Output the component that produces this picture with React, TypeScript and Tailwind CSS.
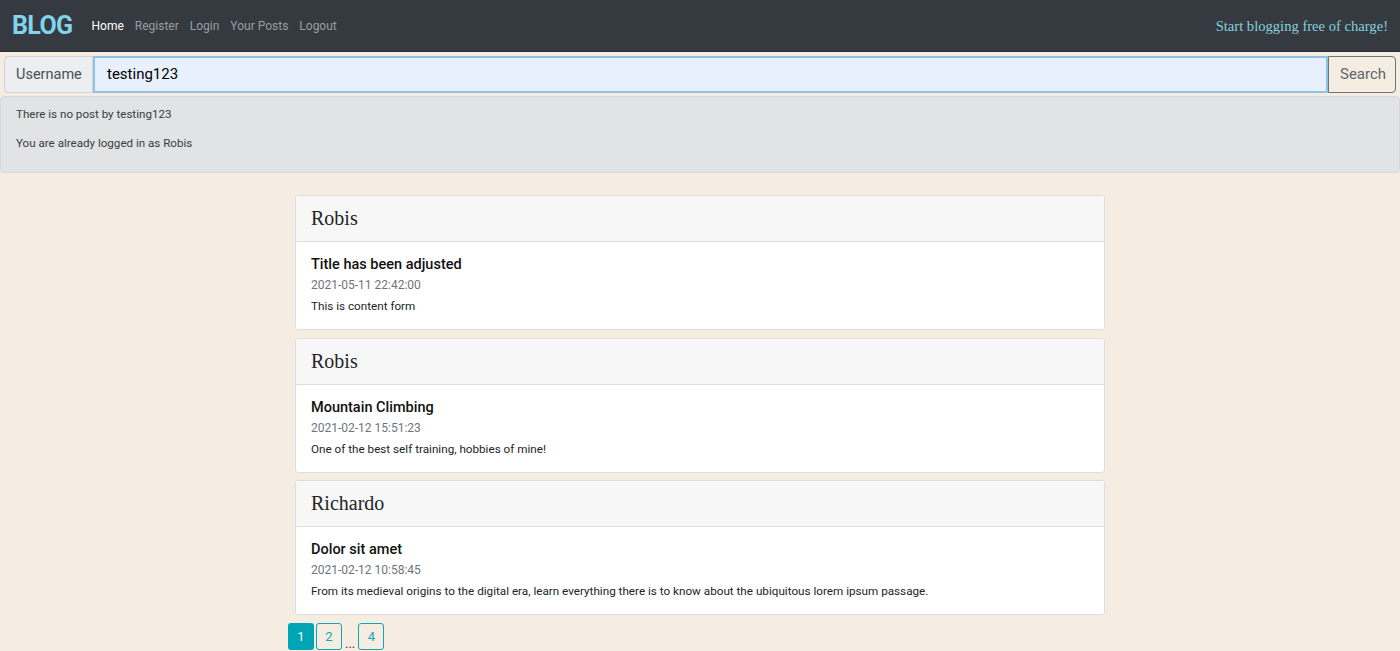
import React from 'react';

const posts = [
  { author: 'Robis', title: 'Title has been adjusted', date: '2021-05-11 22:42:00', content: 'This is content form' },
  { author: 'Robis', title: 'Mountain Climbing', date: '2021-02-12 15:51:23', content: 'One of the best self training, hobbies of mine!' },
  {
    author: 'Richardo',
    title: 'Dolor sit amet',
    date: '2021-02-12 10:58:45',
    content: 'From its medieval origins to the digital era, learn everything there is to know about the ubiquitous lorem ipsum passage.',
  },
];

export default function App() {
  return (
    <div className="min-h-[651px] bg-[#f5ece2] font-['Roboto',sans-serif] text-[#212529]">
      {/* Navbar */}
      <nav className="h-[52px] bg-[#343a40] flex items-center justify-between pl-3 pr-[12px] border-b border-[#2a2f34]">
        <div className="flex items-center">
          <span className="text-[25px] font-bold text-[#80d4ec] leading-none tracking-tight">BLOG</span>
          <div className="flex items-center gap-[11px] ml-[19px] text-[12px]">
            <span className="text-white">Home</span>
            <span className="text-[#9a9da0]">Register</span>
            <span className="text-[#9a9da0]">Login</span>
            <span className="text-[#9a9da0]">Your Posts</span>
            <span className="text-[#9a9da0]">Logout</span>
          </div>
        </div>
        <span className="font-['Liberation_Serif',serif] text-[14.6px] text-[#86cfdc] mt-[3px]">Start blogging free of charge!</span>
      </nav>

      {/* Search */}
      <div className="flex h-[37px] mx-1 mt-[4px] text-[15px]">
        <div className="flex items-center px-[11px] bg-[#eceef0] border border-[#ced4da] rounded-l-[4px] text-[#495057] text-[14.5px] w-[89px]">
          Username
        </div>
        <div className="flex-1 flex items-center pl-[12px] bg-[#e8f0fe] border-2 border-[#8fc1ea] text-black">
          testing123
        </div>
        <div className="flex items-center px-[11px] border border-[#6c757d] rounded-r-[4px] text-[#5f666d] w-[68px]">
          Search
        </div>
      </div>

      {/* Alert */}
      <div className="mt-[3px] bg-[#e2e3e5] border border-[#d6d8db] rounded-[4px] h-[77px] px-[15px] pt-[9px] text-[11.6px] text-[#383d41]">
        <p className="leading-[16px]">There is no post by testing123</p>
        <p className="leading-[16px] mt-[13px]">You are already logged in as Robis</p>
      </div>

      {/* Posts */}
      <div className="w-[810px] mx-auto mt-[22px] flex flex-col gap-[7.5px]">
        {posts.map((p, i) => (
          <div key={i} className="bg-white border border-[#dedede] rounded-[3px] h-[135px] flex flex-col">
            <div className="h-[46px] bg-[#f7f7f7] border-b border-[#dfdfdf] flex items-center px-[15px] pb-[1px] font-['Liberation_Serif',serif] text-[20px] text-[#212529]">
              {p.author}
            </div>
            <div className="px-[15px] pt-[14px]">
              <div className="text-[14.5px] font-medium leading-[18px] text-[#111]">{p.title}</div>
              <div className="text-[12px] text-[#6c757d] mt-[4px] leading-[15px]">{p.date}</div>
              <div className="text-[11.7px] mt-[6px] leading-[15px]">{p.content}</div>
            </div>
          </div>
        ))}
      </div>

      {/* Pagination */}
      <div className="w-[824px] mx-auto mt-2 flex items-end text-[13px] pb-[2px]">
        <span className="w-[26px] h-[27px] flex items-center justify-center bg-[#00a5b5] text-white rounded-[3px]">1</span>
        <span className="ml-[2px] w-[26px] h-[27px] flex items-center justify-center border border-[#17a2b8] text-[#17a2b8] rounded-[3px]">2</span>
        <span className="px-[3px] leading-[12px] text-[#333]">...</span>
        <span className="w-[26px] h-[27px] flex items-center justify-center border border-[#17a2b8] text-[#17a2b8] rounded-[3px]">4</span>
      </div>
    </div>
  );
}
